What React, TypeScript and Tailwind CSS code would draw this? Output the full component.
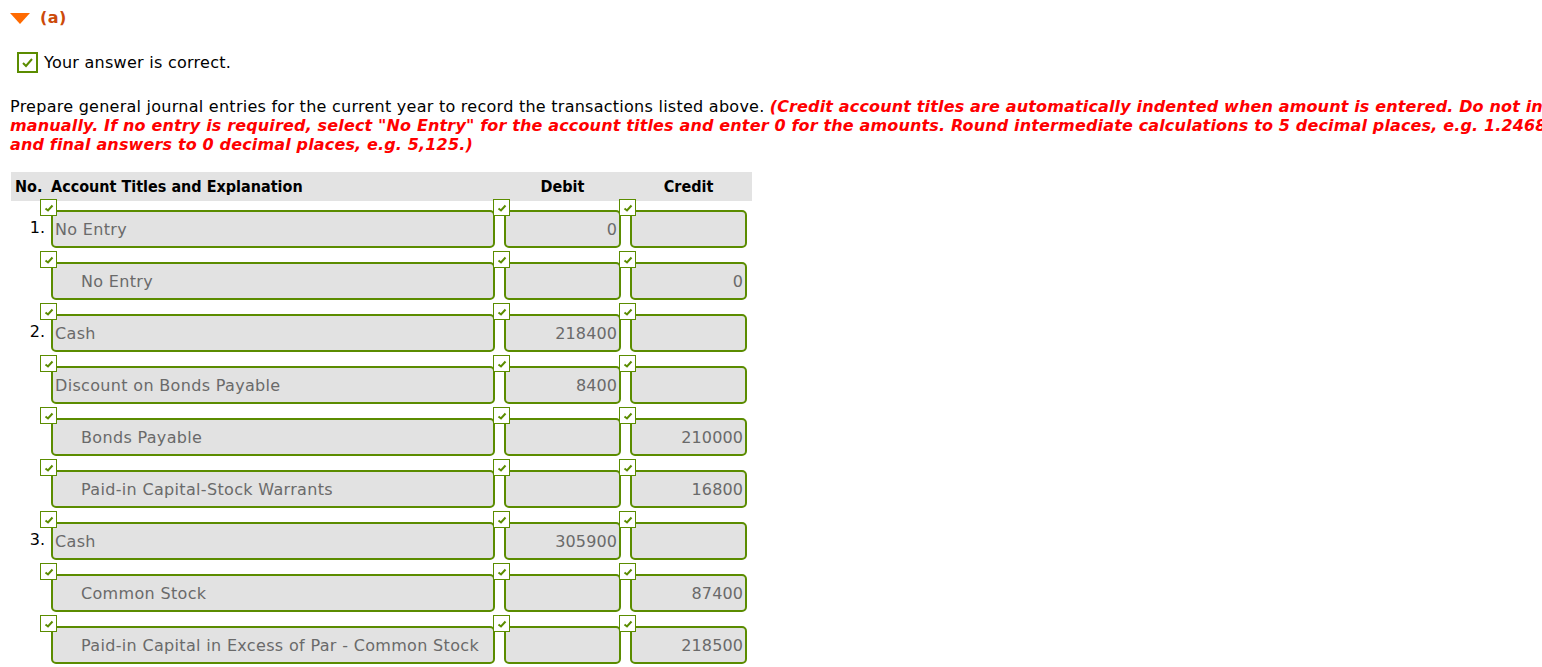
import React from 'react';

type Row = { num?: string; title: string; indent?: boolean; debit?: string; credit?: string };

const rows: Row[] = [
  { num: '1.', title: 'No Entry', debit: '0' },
  { title: 'No Entry', indent: true, credit: '0' },
  { num: '2.', title: 'Cash', debit: '218400' },
  { title: 'Discount on Bonds Payable', debit: '8400' },
  { title: 'Bonds Payable', indent: true, credit: '210000' },
  { title: 'Paid-in Capital-Stock Warrants', indent: true, credit: '16800' },
  { num: '3.', title: 'Cash', debit: '305900' },
  { title: 'Common Stock', indent: true, credit: '87400' },
  { title: 'Paid-in Capital in Excess of Par - Common Stock', indent: true, credit: '218500' },
  { title: '' },
];

function Check({ big }: { big?: boolean }) {
  if (big) {
    return (
      <span className="flex h-[21px] w-[21px] items-center justify-center border-2 border-[#5b8c00] bg-white">
        <svg width="13" height="11" viewBox="0 0 13 11">
          <polyline points="2,6 5,9 11,2" fill="none" stroke="#5b8c00" strokeWidth="2" />
        </svg>
      </span>
    );
  }
  return (
    <span className="absolute -left-[11px] -top-[11px] z-10 flex h-[17px] w-[17px] items-center justify-center border-[1.5px] border-[#5b8c00] bg-white">
      <svg width="10" height="8" viewBox="0 0 10 8">
        <polyline points="1.5,4.5 4,6.5 8.5,1.5" fill="none" stroke="#5b8c00" strokeWidth="2" />
      </svg>
    </span>
  );
}

function Field({ value, className, indent, right }: { value?: string; className: string; indent?: boolean; right?: boolean }) {
  return (
    <div className={`relative ${className}`}>
      <Check />
      <div
        className={`flex h-[38px] items-center rounded-[5px] border-2 border-[#5b8c00] bg-[#e2e2e2] pt-[2px] text-[16px] text-[#6a6a6a] ${
          right ? 'justify-end pr-[2px] tracking-[0.1px]' : indent ? 'pl-[28px] tracking-[0.33px]' : 'pl-[2px] tracking-[0.33px]'
        }`}
      >
        {value}
      </div>
    </div>
  );
}

export default function App() {
  return (
    <div className="h-[667px] w-full overflow-hidden bg-white text-[16px] text-black" style={{ fontFamily: '"DejaVu Sans", Verdana, sans-serif' }}>
      <div className="flex items-center gap-[10px] pl-[10px] pt-[10px]">
        <svg width="20" height="11" viewBox="0 0 20 11">
          <polygon points="0,0 20,0 10,11" fill="#ff6a00" />
        </svg>
        <span className="font-bold leading-[16px] tracking-[0.5px] text-[#cc4a0a]">(a)</span>
      </div>

      <div className="mt-[26px] flex items-center gap-[6px] pl-[17px]">
        <Check big />
        <span className="leading-[20px] tracking-[0.26px]">Your answer is correct.</span>
      </div>

      <p className="mt-[24px] w-[1595px] pl-[10px] leading-[19px]">
        <span className="tracking-[0.26px]">
          Prepare general journal entries for the current year to record the transactions listed above.
        </span>{' '}
        <em className="font-bold tracking-[0.15px] text-[#ff0000]">
          (Credit account titles are automatically indented when amount is entered. Do not indent manually. If no entry is required, select "No Entry" for the account titles and enter 0 for the amounts. Round intermediate calculations to 5 decimal places, e.g. 1.24681 and final answers to 0 decimal places, e.g. 5,125.)
        </em>
      </p>

      <div className="ml-[11px] mt-[18px] w-[741px]">
        <div
          className="flex h-[29px] items-center bg-[#e3e3e3] text-[16px] font-bold"
          style={{ fontFamily: '"DejaVu Sans Condensed", "DejaVu Sans", sans-serif' }}
        >
          <span className="w-[40px] pl-[4px]">No.</span>
          <span className="w-[453px]">Account Titles and Explanation</span>
          <span className="w-[117px] text-center">Debit</span>
          <span className="ml-[9px] w-[117px] text-center">Credit</span>
        </div>
        <div className="flex flex-col gap-[14px] pt-[9px]">
          {rows.map((r, i) => (
            <div key={i} className="flex">
              <span className="w-[40px] pt-[8px] pr-[6px] text-right leading-[19px]">{r.num}</span>
              <Field className="w-[444px]" value={r.title} indent={r.indent} />
              <Field className="ml-[9px] w-[117px]" value={r.debit} right />
              <Field className="ml-[9px] w-[117px]" value={r.credit} right />
            </div>
          ))}
        </div>
      </div>
    </div>
  );
}
